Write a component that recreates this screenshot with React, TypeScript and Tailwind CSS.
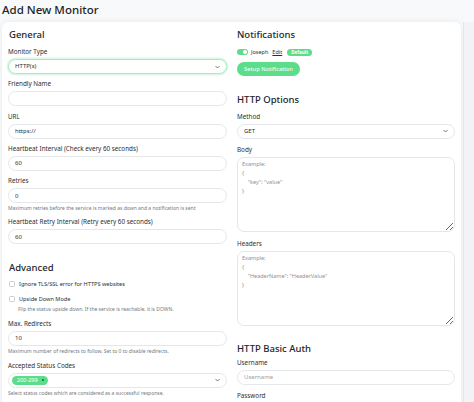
import React from "react";

const FONT = "font-['Noto_Sans',sans-serif]";

function Label({ children }: { children: React.ReactNode }) {
  return <div className="text-[6.3px] leading-[9px] mb-[3px] text-[#2b2f33]">{children}</div>;
}

function Help({ children, className = "" }: { children: React.ReactNode; className?: string }) {
  return <div className={"text-[5px] leading-[6px] text-[#737a81] " + className}>{children}</div>;
}

function TextInput({ value, placeholder }: { value?: string; placeholder?: string }) {
  return (
    <input
      readOnly
      value={value}
      placeholder={placeholder}
      className="block h-[15px] w-full rounded-full border border-[#e4e7ea] bg-white px-[6px] text-[6px] text-[#2b2f33] outline-none placeholder:text-[#9aa0a6]"
    />
  );
}

function Chevron() {
  return (
    <svg width="5" height="4" viewBox="0 0 10 6" fill="none" stroke="#555" strokeWidth="1.6">
      <path d="M1 1l4 4 4-4" />
    </svg>
  );
}

function Select({ value, focused }: { value: string; focused?: boolean }) {
  return (
    <div
      className={
        "flex h-[15px] w-full items-center justify-between rounded-full bg-white pl-[6px] pr-[6px] text-[6px] text-[#2b2f33] " +
        (focused
          ? "border border-[#a6ecbf] shadow-[0_0_0_1.5px_rgba(92,221,139,0.22)]"
          : "border border-[#e4e7ea]")
      }
    >
      <span>{value}</span>
      <Chevron />
    </div>
  );
}

function Heading({ children, className = "" }: { children: React.ReactNode; className?: string }) {
  return (
    <h2 className={"text-[9.5px] leading-[14px] font-medium text-[#212529] " + className}>{children}</h2>
  );
}

function Field({
  label,
  children,
  className = "mb-[5.3px]",
}: {
  label: string;
  children: React.ReactNode;
  className?: string;
}) {
  return (
    <div className={className}>
      <Label>{label}</Label>
      {children}
    </div>
  );
}

function Checkbox({ label }: { label: string }) {
  return (
    <div className="flex h-[9px] items-center gap-[4px] pl-[1px]">
      <span className="block h-[6px] w-[6px] rounded-[1.5px] border border-[#c9cdd1] bg-white" />
      <span className="text-[5.6px] leading-[9px] text-[#2b2f33]">{label}</span>
    </div>
  );
}

function TextArea({ placeholder }: { placeholder: string }) {
  return (
    <textarea
      readOnly
      placeholder={placeholder}
      className="block h-[75px] w-full resize-y rounded-[7px] border border-[#e4e7ea] bg-white px-[4px] py-[2px] text-[5.5px] leading-[9px] text-[#2b2f33] outline-none placeholder:text-[#8d9298]"
    />
  );
}

export default function App() {
  return (
    <div className={"min-h-screen w-[474px] h-[402px] overflow-hidden bg-[#f8f9fa] " + FONT}>
      <h1 className="h-[20px] pl-[2px] pt-[2px] text-[11.5px] leading-[16px] font-medium text-[#212529]">
        Add New Monitor
      </h1>
      <div className="mt-[2px] flex">
        <div className="ml-[2px] w-[459px] h-[400px] rounded-[6px] bg-white px-[6px] pt-[6px] shadow-[0_0_6px_rgba(0,0,0,0.07)] grid grid-cols-[219px_218px] gap-x-[10px] content-start">
          {/* Left column */}
          <div>
            <Heading className="mb-[5px] pl-[1px]">General</Heading>
            <Field label="Monitor Type">
              <Select value="HTTP(s)" focused />
            </Field>
            <Field label="Friendly Name">
              <TextInput />
            </Field>
            <Field label="URL">
              <TextInput value="https://" />
            </Field>
            <Field label="Heartbeat Interval (Check every 60 seconds)">
              <TextInput value="60" />
            </Field>
            <Field label="Retries" className="mb-[6px]">
              <TextInput value="0" />
              <Help className="mt-[2px]">
                Maximum retries before the service is marked as down and a notification is sent
              </Help>
            </Field>
            <Field label="Heartbeat Retry Interval (Retry every 60 seconds)" className="">
              <TextInput value="60" />
            </Field>

            <Heading className="mt-[17px] pl-[1px]">Advanced</Heading>
            <div className="mt-[4.5px]">
              <Checkbox label="Ignore TLS/SSL error for HTTPS websites" />
            </div>
            <div className="mt-[6px]">
              <Checkbox label="Upside Down Mode" />
            </div>
            <Help className="mt-[2px] pl-[10px]">
              Flip the status upside down. If the service is reachable, it is DOWN.
            </Help>
            <Field label="Max. Redirects" className="mt-[7px]">
              <TextInput value="10" />
              <Help className="mt-[2.5px]">
                Maximum number of redirects to follow. Set to 0 to disable redirects.
              </Help>
            </Field>
            <Field label="Accepted Status Codes" className="mt-[6.5px]">
              <div className="flex h-[15px] w-full items-center justify-between rounded-full border border-[#e4e7ea] bg-white pl-[3px] pr-[6px]">
                <span className="flex h-[9px] items-center gap-[4px] rounded-full bg-[#5cdd8b] pl-[5px] pr-[4px] text-[5.5px] text-white">
                  200-299
                  <span className="block h-[2.5px] w-[2.5px] rounded-full bg-[#1b5e34]" />
                </span>
                <Chevron />
              </div>
              <Help className="mt-[2.5px]">
                Select status codes which are considered as a successful response.
              </Help>
            </Field>
          </div>

          {/* Right column */}
          <div>
            <Heading className="mb-[6px]">Notifications</Heading>
            <div className="flex h-[8px] items-center gap-[3px]">
              <span className="flex h-[6px] w-[11px] items-center justify-end rounded-full bg-[#5cdd8b] pr-[1px]">
                <span className="block h-[4px] w-[4px] rounded-full bg-white" />
              </span>
              <span className="text-[5.5px] leading-[8px] text-[#2b2f33]">Joseph</span>
              <span className="ml-[1px] text-[5.5px] leading-[8px] text-[#2b2f33] underline">Edit</span>
              <span className="ml-[2px] flex h-[7px] items-center rounded-full bg-[#5cdd8b] px-[4px] text-[4.6px] font-bold text-white">
                Default
              </span>
            </div>
            <button className="mt-[6px] flex h-[14px] w-[63px] items-center justify-center rounded-full bg-[#5cdd8b] text-[5.8px] text-white">
              Setup Notification
            </button>

            <Heading className="mt-[17px] mb-[4.5px]">HTTP Options</Heading>
            <Field label="Method" className="mb-[6.3px]">
              <Select value="GET" />
            </Field>
            <Field label="Body" className="mb-[6.8px]">
              <TextArea placeholder={'Example:\n{\n    "key": "value"\n}'} />
            </Field>
            <Field label="Headers" className="">
              <TextArea placeholder={'Example:\n{\n    "HeaderName": "HeaderValue"\n}'} />
            </Field>

            <Heading className="mt-[16px] mb-[2px]">HTTP Basic Auth</Heading>
            <Field label="Username" className="mb-[6px]">
              <TextInput placeholder="Username" />
            </Field>
            <Label>Password</Label>
          </div>
        </div>
        <div className="ml-[2px] h-[400px] flex-1 border-l border-[#e6e6e6] bg-[#f2f3f4]" />
      </div>
    </div>
  );
}
